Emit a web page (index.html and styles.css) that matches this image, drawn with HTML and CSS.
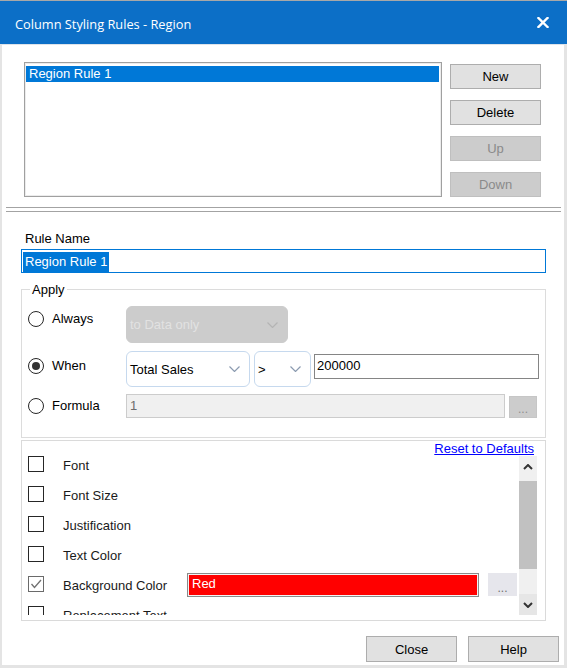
FILE: index.html
```html
<!DOCTYPE html>
<html>
<head>
<meta charset="utf-8">
<link rel="stylesheet" href="styles.css">
</head>
<body>
<div class="window">
  <div class="titlebar">
    <span class="title">Column Styling Rules - Region</span>
    <svg class="close" width="12" height="11" viewBox="0 0 12 11"><path d="M1.5 1 L10.5 10 M10.5 1 L1.5 10" stroke="#fff" stroke-width="2.4" stroke-linecap="square" fill="none"/></svg>
  </div>
  <div class="content">
    <div class="top">
      <div class="listbox">
        <div class="item sel">Region Rule 1</div>
      </div>
      <div class="btncol">
        <button class="btn">New</button>
        <button class="btn">Delete</button>
        <button class="btn disabled">Up</button>
        <button class="btn disabled">Down</button>
      </div>
    </div>
    <div class="sep"></div>
    <div class="field">
      <div class="fieldlabel">Rule Name</div>
      <div class="textbox focus"><span class="hl">Region Rule 1</span></div>
    </div>
    <fieldset class="apply">
      <legend>Apply</legend>
      <div class="orow r1">
        <div class="opt"><span class="radio"></span><span class="olabel">Always</span></div>
        <div class="combo dis w162"><span>to Data only</span><svg width="11" height="6" viewBox="0 0 11 6"><polyline points="0.5,0.5 5.5,5.5 10.5,0.5" fill="none" stroke="#b4b4b4" stroke-width="1.2"/></svg></div>
      </div>
      <div class="orow r2">
        <div class="opt"><span class="radio on"></span><span class="olabel">When</span></div>
        <div class="combo w124"><span>Total Sales</span><svg width="11" height="6" viewBox="0 0 11 6"><polyline points="0.5,0.5 5.5,5.5 10.5,0.5" fill="none" stroke="#8b9bb0" stroke-width="1.2"/></svg></div>
        <div class="combo w57"><span>&gt;</span><svg width="11" height="6" viewBox="0 0 11 6"><polyline points="0.5,0.5 5.5,5.5 10.5,0.5" fill="none" stroke="#8b9bb0" stroke-width="1.2"/></svg></div>
        <div class="textbox val">200000</div>
      </div>
      <div class="orow r3">
        <div class="opt"><span class="radio"></span><span class="olabel">Formula</span></div>
        <div class="textbox formula">1</div>
        <div class="dots dis">...</div>
      </div>
    </fieldset>
    <div class="panel">
      <div class="reset"><a href="#">Reset to Defaults</a></div>
      <div class="scrollarea">
        <div class="list">
          <div class="crow"><span class="check"></span><span class="clabel">Font</span></div>
          <div class="crow"><span class="check"></span><span class="clabel">Font Size</span></div>
          <div class="crow"><span class="check"></span><span class="clabel">Justification</span></div>
          <div class="crow"><span class="check"></span><span class="clabel">Text Color</span></div>
          <div class="crow"><span class="check on"><svg width="14" height="14" viewBox="0 0 14 14"><polyline points="2.5,7 5.5,10.5 12,3" fill="none" stroke="#707070" stroke-width="1.3"/></svg></span><span class="clabel">Background Color</span><div class="redbox">Red</div><div class="dots pick">...</div></div>
          <div class="crow"><span class="check"></span><span class="clabel">Replacement Text</span></div>
        </div>
        <div class="scrollbar">
          <div class="sb-btn"><svg width="10" height="6" viewBox="0 0 10 6"><polyline points="1,5 5,1 9,5" fill="none" stroke="#333" stroke-width="2"/></svg></div>
          <div class="thumb"></div>
          <div class="track"></div>
          <div class="sb-btn down"><svg width="10" height="6" viewBox="0 0 10 6"><polyline points="1,1 5,5 9,1" fill="none" stroke="#333" stroke-width="2"/></svg></div>
        </div>
      </div>
    </div>
    <div class="footer">
      <button class="btn big">Close</button>
      <button class="btn big">Help</button>
    </div>
  </div>
</div>
</body>
</html>
```
FILE: styles.css
```css
* { box-sizing: border-box; }
html, body { margin: 0; padding: 0; background: #fff; }
body {
  font-family: "Liberation Sans", Arial, sans-serif;
  font-size: 13px;
  color: #000;
}
.window {
  width: 567px;
  height: 668px;
  display: flex;
  flex-direction: column;
  border-top: 1px solid #a8a8a8;
}
.titlebar {
  height: 43px;
  flex: none;
  background: #0c6fc7;
  display: flex;
  align-items: center;
  justify-content: space-between;
  padding: 0 18px 0 15px;
  color: #fff;
}
.title {
  font-family: "Open Sans", "Noto Sans", sans-serif;
  font-size: 12.8px;
  margin-top: 3px;
}
.close { display: block; }
.content {
  flex: 1;
  display: flex;
  flex-direction: column;
  border-left: 2px solid #e4e4e4;
  border-right: 3px solid #e4e4e4;
  border-bottom: 3px solid #e4e4e4;
  border-top: 1px solid #dde3ea;
}
.top {
  display: flex;
  padding: 17px 0 0 22px;
}
.listbox {
  width: 418px;
  height: 135px;
  border: 1px solid #a0a0a0;
  box-shadow: inset 0 0 0 1px #ececec;
  padding: 3px 2px 3px 1px;
}
.item {
  height: 16px;
  line-height: 16px;
  padding-left: 3px;
}
.item.sel { background: #0078d7; color: #fff; }
.btncol {
  display: flex;
  flex-direction: column;
  gap: 11px;
  margin: 2px 0 0 8px;
}
.btn {
  width: 91px;
  height: 25px;
  background: #e1e1e1;
  border: 1px solid #adadad;
  font-family: "Liberation Sans", Arial, sans-serif;
  font-size: 13px;
  color: #000;
  padding: 0;
  margin: 0;
}
.btn.disabled {
  background: #cccccc;
  border-color: #bfbfbf;
  color: #8a8a8a;
}
.btn.big { height: 26px; }
.sep {
  margin: 10px 3px 0 4px;
  height: 5px;
  border-top: 1px solid #a3a3a3;
  border-bottom: 1px solid #a3a3a3;
}
.field { margin: 19px 0 0 19px; }
.fieldlabel {
  line-height: 15px;
  padding-left: 4px;
}
.textbox {
  border: 1px solid #7a7a7a;
  background: #fff;
}
.textbox.focus {
  margin-top: 3px;
  width: 525px;
  height: 24px;
  border-color: #0078d7;
  padding: 2px 0 0 1px;
}
.hl {
  display: inline-block;
  height: 20px;
  line-height: 20px;
  padding: 0 2px;
  background: #0078d7;
  color: #fff;
}
.apply {
  margin: 9px 0 0 19px;
  width: 525px;
  border: 1px solid #dcdcdc;
  padding: 9px 0 19px 6px;
  min-width: 0;
}
.apply legend {
  line-height: 15px;
  padding: 0 2px;
  margin-left: 2px;
}
.orow {
  display: flex;
  align-items: flex-start;
}
.r1 { height: 37px; }
.r2 { height: 36px; margin-top: 8px; }
.r3 { height: 24px; margin-top: 7px; }
.opt {
  width: 98px;
  flex: none;
  display: flex;
  align-items: center;
  gap: 8px;
}
.r1 .opt { margin-top: 5px; }
.r2 .opt { margin-top: 7px; }
.r3 .opt { margin-top: 4px; }
.olabel { line-height: 16px; }
.radio {
  width: 16px;
  height: 16px;
  border: 1px solid #262626;
  border-radius: 50%;
  display: flex;
  align-items: center;
  justify-content: center;
  background: #fff;
}
.radio.on::after {
  content: "";
  width: 8px;
  height: 8px;
  border-radius: 50%;
  background: #333;
}
.combo {
  display: flex;
  align-items: center;
  justify-content: space-between;
  border: 1px solid #c6d9ee;
  border-radius: 6px;
  padding: 0 9px 0 3px;
  background: #fff;
  flex: none;
}
.combo svg { display: block; }
.combo.dis {
  background: #cccccc;
  border-color: #cccccc;
  color: #e2e2e2;
}
.w162 { width: 162px; height: 37px; }
.w124 { width: 124px; height: 36px; }
.w57 { width: 57px; height: 36px; margin-left: 4px; }
.textbox.val {
  width: 225px;
  height: 25px;
  margin: 3px 0 0 3px;
  line-height: 21px;
  padding-left: 2px;
  border-color: #858585;
}
.textbox.formula {
  width: 379px;
  height: 24px;
  background: #f0f0f0;
  border-color: #cccccc;
  color: #6d6d6d;
  line-height: 22px;
  padding-left: 3px;
}
.dots {
  display: flex;
  align-items: center;
  justify-content: center;
  color: #808080;
  font-size: 12px;
  padding-top: 3px;
  flex: none;
}
.dots.dis {
  width: 28px;
  height: 22px;
  margin: 2px 0 0 4px;
  background: #cccccc;
  border: 1px solid #c6c6c6;
  color: #8f8f8f;
}
.panel {
  margin: 2px 0 0 19px;
  width: 525px;
  height: 181px;
  border: 1px solid #dadada;
  flex: none;
}
.reset {
  height: 15px;
  line-height: 15px;
  text-align: right;
  padding-right: 11px;
}
.reset a { color: #0000ff; text-decoration: underline; }
.scrollarea {
  display: flex;
  height: 159px;
  padding-right: 8px;
}
.list {
  flex: 1;
  overflow: hidden;
  padding-left: 6px;
}
.crow {
  height: 30px;
  display: flex;
  align-items: flex-start;
}
.check {
  width: 16px;
  height: 16px;
  border: 1px solid #262626;
  background: #fff;
  flex: none;
  margin-right: 19px;
  display: flex;
  align-items: center;
  justify-content: center;
}
.check.on { border-color: #6a6a6a; }
.check svg { display: block; }
.clabel {
  width: 124px;
  flex: none;
  padding-top: 2px;
  line-height: 16px;
  color: #1a1a1a;
}
.redbox {
  width: 292px;
  height: 24px;
  margin-top: -3px;
  background: #ff0000;
  border: 1px solid #8a8a8a;
  box-shadow: inset 0 0 0 1px #f3f3f3;
  color: #fff;
  padding: 2px 0 0 4px;
  line-height: 16px;
  flex: none;
}
.dots.pick {
  width: 29px;
  height: 23px;
  margin: -3px 0 0 9px;
  background: #e6e6ec;
  color: #707070;
  padding-top: 6px;
}
.scrollbar {
  width: 18px;
  flex: none;
  display: flex;
  flex-direction: column;
  background: #f0f0f0;
}
.sb-btn {
  height: 21px;
  display: flex;
  align-items: center;
  justify-content: center;
  flex: none;
}
.sb-btn svg { display: block; }
.sb-btn.down { background: #e6e6e6; }
.thumb {
  margin-top: 4px;
  height: 88px;
  background: #c1c1c1;
  flex: none;
}
.track { flex: 1; }
.footer {
  display: flex;
  justify-content: flex-end;
  gap: 11px;
  margin: 15px 5px 0 0;
}
```
